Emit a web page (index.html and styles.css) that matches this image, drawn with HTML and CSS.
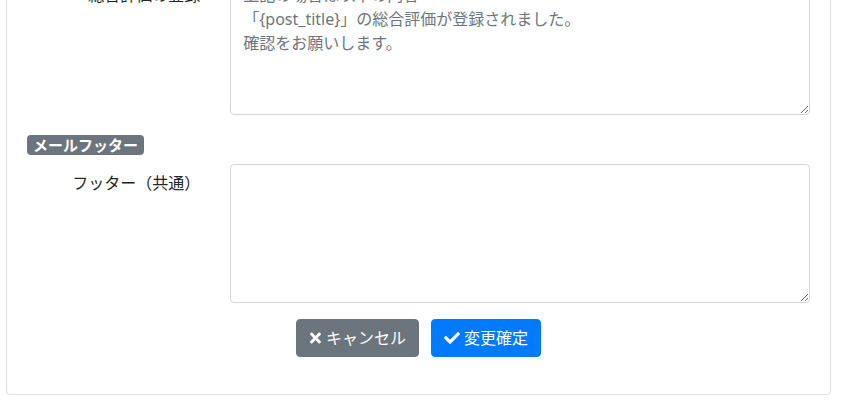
FILE: index.html
```html
<!DOCTYPE html>
<html lang="ja">
<head>
<meta charset="utf-8">
<link rel="stylesheet" href="styles.css">
</head>
<body>
<div class="card">
  <div class="card-body">
    <div class="form-row first">
      <label class="col-label">総合評価の登録</label>
      <div class="col-field">
        <textarea class="form-control">上記の場合は以下の内容
「{post_title}」の総合評価が登録されました。
確認をお願いします。</textarea>
      </div>
    </div>
    <div class="section"><span class="badge">メールフッター</span></div>
    <div class="form-row">
      <label class="col-label">フッター（共通）</label>
      <div class="col-field">
        <textarea class="form-control"></textarea>
      </div>
    </div>
    <div class="actions">
      <button class="btn btn-secondary" type="button">
        <svg class="icon" viewBox="0 0 352 512" width="13" height="16"><path fill="currentColor" d="M242.72 256l100.07-100.07c12.280-12.28 12.28-32.19 0-44.48l-22.24-22.24c-12.28-12.28-32.19-12.28-44.48 0L176 189.28 75.93 89.21c-12.28-12.28-32.19-12.28-44.48 0L9.21 111.45c-12.28 12.28-12.28 32.19 0 44.48L109.28 256 9.21 356.07c-12.28 12.28-12.28 32.19 0 44.48l22.24 22.240c12.28 12.28 32.2 12.28 44.48 0L176 322.72l100.07 100.07c12.28 12.28 32.2 12.28 44.48 0l22.24-22.24c12.28-12.28 12.28-32.19 0-44.48L242.72 256z"/></svg>キャンセル
      </button>
      <button class="btn btn-primary" type="button">
        <svg class="icon" viewBox="0 0 512 512" width="16" height="16"><path fill="currentColor" d="M173.898 439.404l-166.4-166.4c-9.997-9.997-9.997-26.206 0-36.204l36.203-36.204c9.997-9.998 26.207-9.998 36.204 0L192 312.690 432.095 72.596c9.997-9.997 26.207-9.997 36.204 0l36.203 36.204c9.997 9.997 9.997 26.206 0 36.204l-294.4 294.401c-9.998 9.997-26.207 9.997-36.204-.001z"/></svg>変更確定
      </button>
    </div>
  </div>
</div>
</body>
</html>
```

FILE: styles.css
```css
html, body {
  margin: 0;
  padding: 0;
  background: #fff;
}
body {
  font-family: "Noto Sans", "Noto Sans CJK JP", sans-serif;
  font-size: 16px;
  line-height: 24px;
  color: #212529;
  overflow: hidden;
}
.card {
  margin: -45px 12px 0 6px;
  border: 1px solid #dfdfdf;
  border-radius: 4px;
  background: #fff;
}
.card-body {
  padding: 20px;
}
.form-row {
  display: flex;
  margin: 0 -15px;
}
.form-row.first {
  margin-bottom: 20px;
}
.col-label {
  flex: 0 0 25%;
  box-sizing: border-box;
  padding: 7px 15px 0;
  text-align: right;
}
.col-field {
  flex: 0 0 75%;
  box-sizing: border-box;
  padding: 0 15px;
}
.form-control {
  display: block;
  width: 100%;
  box-sizing: border-box;
  height: 139px;
  padding: 6px 12px;
  border: 1px solid #ced4da;
  border-radius: 4px;
  font-family: "Noto Sans", "Noto Sans CJK JP", sans-serif;
  font-size: 16px;
  line-height: 24px;
  color: #6c757d;
  background: #fff;
  resize: vertical;
  margin: 0;
}
.section {
  height: 20px;
  margin-bottom: 9px;
}
.badge {
  display: inline-block;
  background: #6c757d;
  color: #fff;
  font-weight: 700;
  font-size: 15px;
  line-height: 20px;
  height: 20px;
  padding: 0 6px;
  border-radius: 4px;
  vertical-align: top;
}
.actions {
  display: flex;
  justify-content: center;
  gap: 12px;
  margin-top: 16px;
  margin-bottom: 17px;
}
.btn {
  display: inline-flex;
  align-items: center;
  height: 38px;
  padding: 0 12px;
  border: 1px solid transparent;
  border-radius: 4px;
  font-family: "Noto Sans", "Noto Sans CJK JP", sans-serif;
  font-size: 16px;
  line-height: 24px;
  color: #fff;
  cursor: pointer;
}
.btn-secondary {
  background: #6c757d;
  border-color: #6c757d;
}
.btn-primary {
  background: #007bff;
  border-color: #007bff;
}
.icon {
  margin-right: 4px;
}
```
